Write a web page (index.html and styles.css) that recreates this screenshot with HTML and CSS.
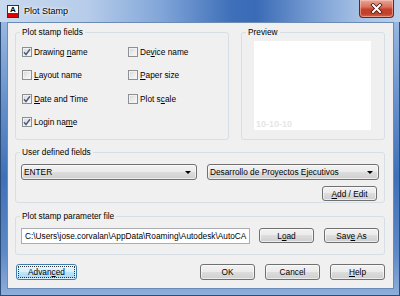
FILE: index.html
```html
<!DOCTYPE html>
<html lang="en">
<head>
    <meta charset="UTF-8">
    <meta name="viewport" content="width=device-width, initial-scale=1.0">
    <title>Plot Stamp</title>
    <link rel="stylesheet" href="styles.css">
</head>
<body>
    <div class="window">
        <!-- title bar -->
        <div class="titlebar">
            <span class="app-icon"><span class="app-icon-letter">A</span></span>
            <span class="title">Plot Stamp</span>
            <button type="button" class="close-btn">
                <svg width="13" height="11" viewBox="0 0 13 11">
                    <path d="M3 2 L10 9 M10 2 L3 9" stroke="#4a1408" stroke-width="3.6" stroke-linecap="square"/>
                    <path d="M3 2 L10 9 M10 2 L3 9" stroke="#fff" stroke-width="2" stroke-linecap="square"/>
                </svg>
            </button>
        </div>

        <div class="client">
            <div class="top-row">
                <!-- plot stamp fields -->
                <fieldset class="group fields-group">
                    <legend>Plot stamp fields</legend>
                    <div class="check-grid">
                        <label class="check"><span class="box checked"><svg width="8" height="8" viewBox="0 0 8 8"><path d="M1 4.2 L3 6.5 L7 1.2" fill="none" stroke="#4b5f86" stroke-width="1.5"/></svg></span><span>Drawing <u>n</u>ame</span></label>
                        <label class="check"><span class="box"></span><span>De<u>v</u>ice name</span></label>
                        <label class="check"><span class="box"></span><span><u>L</u>ayout name</span></label>
                        <label class="check"><span class="box"></span><span><u>P</u>aper size</span></label>
                        <label class="check"><span class="box checked"><svg width="8" height="8" viewBox="0 0 8 8"><path d="M1 4.2 L3 6.5 L7 1.2" fill="none" stroke="#4b5f86" stroke-width="1.5"/></svg></span><span><u>D</u>ate and Time</span></label>
                        <label class="check"><span class="box"></span><span>Plot s<u>c</u>ale</span></label>
                        <label class="check"><span class="box checked"><svg width="8" height="8" viewBox="0 0 8 8"><path d="M1 4.2 L3 6.5 L7 1.2" fill="none" stroke="#4b5f86" stroke-width="1.5"/></svg></span><span>Login na<u>m</u>e</span></label>
                    </div>
                </fieldset>

                <!-- preview -->
                <fieldset class="group preview-group">
                    <legend>Preview</legend>
                    <div class="preview-box"><span class="preview-date">10-10-10</span></div>
                </fieldset>
            </div>

            <!-- user defined fields -->
            <fieldset class="group user-group">
                <legend>User defined fields</legend>
                <div class="combo-row">
                    <div class="combo combo-left"><span>ENTER</span><span class="arrow"></span></div>
                    <div class="combo combo-right"><span>Desarrollo de Proyectos Ejecutivos</span><span class="arrow"></span></div>
                </div>
                <div class="add-row">
                    <button type="button" class="btn btn-small"><u>A</u>dd / Edit</button>
                </div>
            </fieldset>

            <!-- parameter file -->
            <fieldset class="group file-group">
                <legend>Plot stamp parameter file</legend>
                <div class="file-row">
                    <div class="textbox">C:\Users\jose.corvalan\AppData\Roaming\Autodesk\AutoCA</div>
                    <button type="button" class="btn btn-small">L<u>o</u>ad</button>
                    <button type="button" class="btn btn-small">Sav<u>e</u> As</button>
                </div>
            </fieldset>

            <!-- dialog buttons -->
            <div class="bottom-row">
                <button type="button" class="btn btn-advanced">Advan<u>c</u>ed</button>
                <div class="bottom-right">
                    <button type="button" class="btn">OK</button>
                    <button type="button" class="btn">Cancel</button>
                    <button type="button" class="btn"><u>H</u>elp</button>
                </div>
            </div>
        </div>
    </div>
</body>
</html>
```

FILE: styles.css
```css
/* page */
body {
    margin: 0;
    font-family: 'Liberation Sans', Arial, sans-serif;
    font-size: 8.3px;
    color: #000;
}
.window {
    width: 400px;
    height: 296px;
    box-sizing: border-box;
    display: flex;
    flex-direction: column;
    border: 1px solid #2c4d78;
    border-top: none;
    background: linear-gradient(to bottom, #a7c2e6 0%, #6690cb 35%, #3f70b8 60%, #5c88c6 85%, #8eaedb 100%);
}

/* title bar */
.titlebar {
    height: 22px;
    flex-shrink: 0;
    display: flex;
    align-items: center;
    margin: 0 -1px;
    padding-left: 7px;
    background: linear-gradient(to right, #c9d9ef 0%, #b6cce9 22%, #82a6d9 40%, #3e6fb9 58%, #3a6bb6 64%, #7fa3d6 80%, #a7c1e5 90%, #b9cfeb 100%);
}
.app-icon {
    width: 10px;
    height: 11px;
    border: 1px solid #333;
    background: linear-gradient(to bottom, #fff 0%, #fff 62%, #e00000 62%, #e00000 100%);
    display: flex;
    justify-content: center;
    margin-top: 1px;
}
.app-icon-letter {
    font-size: 8px;
    font-weight: bold;
    line-height: 8px;
}
.title {
    margin-left: 5px;
    font-size: 9px;
    text-shadow: 0 0 4px #fff, 0 0 2px #fff;
}
.close-btn {
    margin-left: auto;
    margin-right: 6px;
    align-self: flex-start;
    width: 35px;
    height: 18px;
    padding: 0;
    border: 1px solid #6a2418;
    border-top: none;
    border-radius: 0 0 4px 4px;
    background: linear-gradient(to bottom, #e8a796 0%, #d97360 40%, #c7412a 55%, #c2402b 80%, #d1664d 100%);
    box-shadow: inset 0 0 0 1px rgba(255, 210, 200, 0.5);
    display: flex;
    align-items: center;
    justify-content: center;
}

/* client area */
.client {
    flex: 1;
    margin: 0 5px 6px 6px;
    border: 1px solid #6c8bb4;
    background: #f0f0f0;
    padding: 4px 8px 0 7px;
    display: flex;
    flex-direction: column;
}

/* group boxes */
.group {
    margin: 0;
    padding-left: 0;
    padding-right: 0;
    border: 1px solid #d5dfe5;
    border-radius: 3px;
    min-width: 0;
}
.group legend {
    padding: 0 2px;
    margin-left: 4px;
    line-height: 10px;
}
.top-row {
    display: grid;
    grid-template-columns: 214px 1fr;
    gap: 12px;
}
.fields-group {
    padding-top: 3px;
    padding-bottom: 5px;
}
.check-grid {
    display: grid;
    grid-template-columns: 106px 1fr;
    grid-auto-rows: 23.5px;
    margin-left: 6px;
}
.check {
    display: flex;
    align-items: center;
    gap: 2px;
}
.box {
    width: 8px;
    height: 8px;
    border: 1px solid #8e8f8f;
    background: linear-gradient(135deg, #d3d6da 0%, #eceef0 60%, #fafafa 100%);
    box-shadow: inset 0 0 0 1px #f2f2f2;
    display: flex;
    align-items: center;
    justify-content: center;
}
.preview-group {
    padding-top: 4px;
}
.preview-box {
    width: 117px;
    height: 89px;
    margin-left: 12px;
    background: #fff;
    display: flex;
    flex-direction: column;
    justify-content: flex-end;
}
.preview-date {
    color: #e6e6e6;
    font-size: 9px;
    font-weight: bold;
    padding: 0 0 1px 2px;
}

/* user defined fields */
.user-group {
    margin-top: 7px;
    padding-top: 7px;
    padding-bottom: 1px;
}
.combo-row {
    display: flex;
    gap: 10px;
    margin: 0 5px;
}
.combo {
    height: 14px;
    border: 1px solid #707070;
    border-radius: 3px;
    background: linear-gradient(to bottom, #f2f2f2 0%, #ebebeb 49%, #dddddd 50%, #cfcfcf 100%);
    box-shadow: inset 0 0 0 1px rgba(255, 255, 255, 0.6);
    display: flex;
    align-items: center;
    padding: 0 5px 0 2px;
    white-space: nowrap;
    overflow: hidden;
}
.combo-left {
    width: 167px;
}
.combo-right {
    flex: 1;
}
.arrow {
    margin-left: auto;
    border-left: 3px solid transparent;
    border-right: 3px solid transparent;
    border-top: 3px solid #000;
}
.add-row {
    display: flex;
    justify-content: flex-end;
    margin: 6px 7px 0 0;
}

/* parameter file */
.file-group {
    margin-top: 8px;
    padding-top: 7px;
    padding-bottom: 10px;
}
.file-row {
    display: flex;
    align-items: flex-start;
    margin-left: 5px;
}
.textbox {
    width: 224px;
    height: 14px;
    line-height: 14px;
    border: 1px solid #abadb3;
    background: #fff;
    padding-left: 3px;
    white-space: nowrap;
    overflow: hidden;
}
.file-row .btn:first-of-type {
    margin-left: 9px;
}
.file-row .btn + .btn {
    margin-left: 10px;
}

/* buttons */
.btn {
    width: 55px;
    height: 16px;
    padding: 0;
    font: inherit;
    color: #000;
    border: 1px solid #707070;
    border-radius: 3px;
    background: linear-gradient(to bottom, #f2f2f2 0%, #ebebeb 49%, #dddddd 50%, #cfcfcf 100%);
    box-shadow: inset 0 0 0 1px rgba(255, 255, 255, 0.6);
}
.btn-small {
    height: 15px;
}
.bottom-row {
    display: flex;
    margin-top: 9px;
    padding-left: 1px;
}
.btn-advanced {
    width: 61px;
    border-color: #3c7fb1;
    background: linear-gradient(to bottom, #eaf6fd 0%, #d9f0fc 49%, #bee6fd 50%, #a7d9f5 100%);
    outline: 1px dotted #333;
    outline-offset: -3px;
}
.bottom-right {
    margin-left: auto;
    display: flex;
    gap: 10px;
}
```
